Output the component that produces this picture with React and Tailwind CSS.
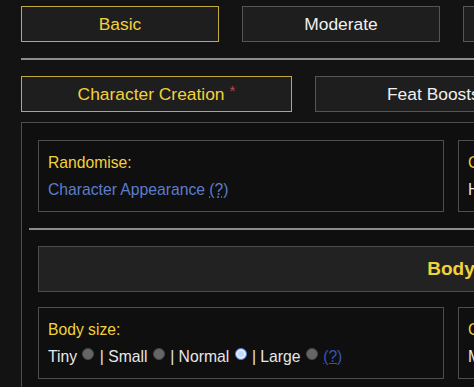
import React from 'react';

const Radio = ({ checked }) => (
  <span
    className={`inline-block w-[12px] h-[12px] rounded-full align-[2px] mx-[1px] border ${
      checked
        ? 'bg-[#c4dafc] border-[#4f7fd8] shadow-[inset_0_0_0_2px_#e2ecfd]'
        : 'bg-[#666666] border-[#474747]'
    }`}
  />
);

const Card = ({ title, children }) => (
  <div className="w-[406px] h-[72px] shrink-0 border border-[#4d4d4d] bg-[#0f0f0f] px-[9px] pt-[8px] leading-[27px] text-[15.7px]">
    <div className="text-[#f2d23c]">{title}</div>
    <div className="text-[#e8e8e8] whitespace-nowrap">{children}</div>
  </div>
);

export default function App() {
  return (
    <div
      className="w-[474px] h-[387px] overflow-hidden bg-[#131313]"
      style={{ fontFamily: '"Liberation Sans", Arial, sans-serif' }}
    >
      <div className="w-[900px] pl-[21px] pt-[6px]">
        {/* Level buttons */}
        <div className="flex gap-[23px]">
          <div className="w-[198px] h-[36px] flex items-center justify-center border border-[#c2aa3e] bg-[#1e1e1e] text-[#f2d23c] text-[17.4px]">
            Basic
          </div>
          <div className="w-[198px] h-[36px] flex items-center justify-center border border-[#555] bg-[#1e1e1e] text-[#f0f0f0] text-[17.4px]">
            Moderate
          </div>
          <div className="w-[198px] h-[36px] flex items-center justify-center border border-[#555] bg-[#1e1e1e] text-[#f0f0f0] text-[17.4px]">
            Advanced
          </div>
        </div>

        <div className="mt-[16px] h-[2px] bg-[#8c8c8c]" />

        {/* Tabs */}
        <div className="flex gap-[23px] mt-[16px]">
          <div className="w-[271px] h-[36px] flex items-center justify-center border border-[#c2aa3e] bg-[#1e1e1e] text-[#f2d23c] text-[17.4px]">
            Character Creation
            <span className="text-[#c04848] text-[15px] ml-[5px] -mt-[6px]">*</span>
          </div>
          <div className="w-[271px] h-[36px] flex items-center pl-[71px] border border-[#555] bg-[#1e1e1e] text-[#f0f0f0] text-[17.4px]">
            Feat Boosts
          </div>
        </div>

        {/* Panel */}
        <div className="mt-[10px] border border-[#4d4d4d] bg-[#0f0f0f] pt-[17px] pb-[20px]">
          <div className="flex gap-[14px] px-[16px]">
            <Card title="Randomise:">
              <span className="text-[#5d7dcc]">
                Character Appearance{' '}
                <span className="underline decoration-dotted underline-offset-2">(?)</span>
              </span>
            </Card>
            <Card title="Customise:">Heritage</Card>
          </div>

          <div className="mx-[7px] mt-[16px] h-[2px] bg-[#8c8c8c]" />

          <div className="px-[16px] mt-[16px]">
            <div className="w-[826px] h-[46px] flex items-center justify-center border border-[#4d4d4d] bg-[#222222] text-[#f2d23c] text-[19px] font-bold">
              Body
            </div>
          </div>

          <div className="flex gap-[14px] px-[16px] mt-[15px]">
            <Card title="Body size:">
              Tiny <Radio /> | Small <Radio /> | Normal <Radio checked /> | Large <Radio />{' '}
              <span className="text-[#3553b8] underline">(?)</span>
            </Card>
            <Card title="Colour:">Match</Card>
          </div>
        </div>
      </div>
    </div>
  );
}
